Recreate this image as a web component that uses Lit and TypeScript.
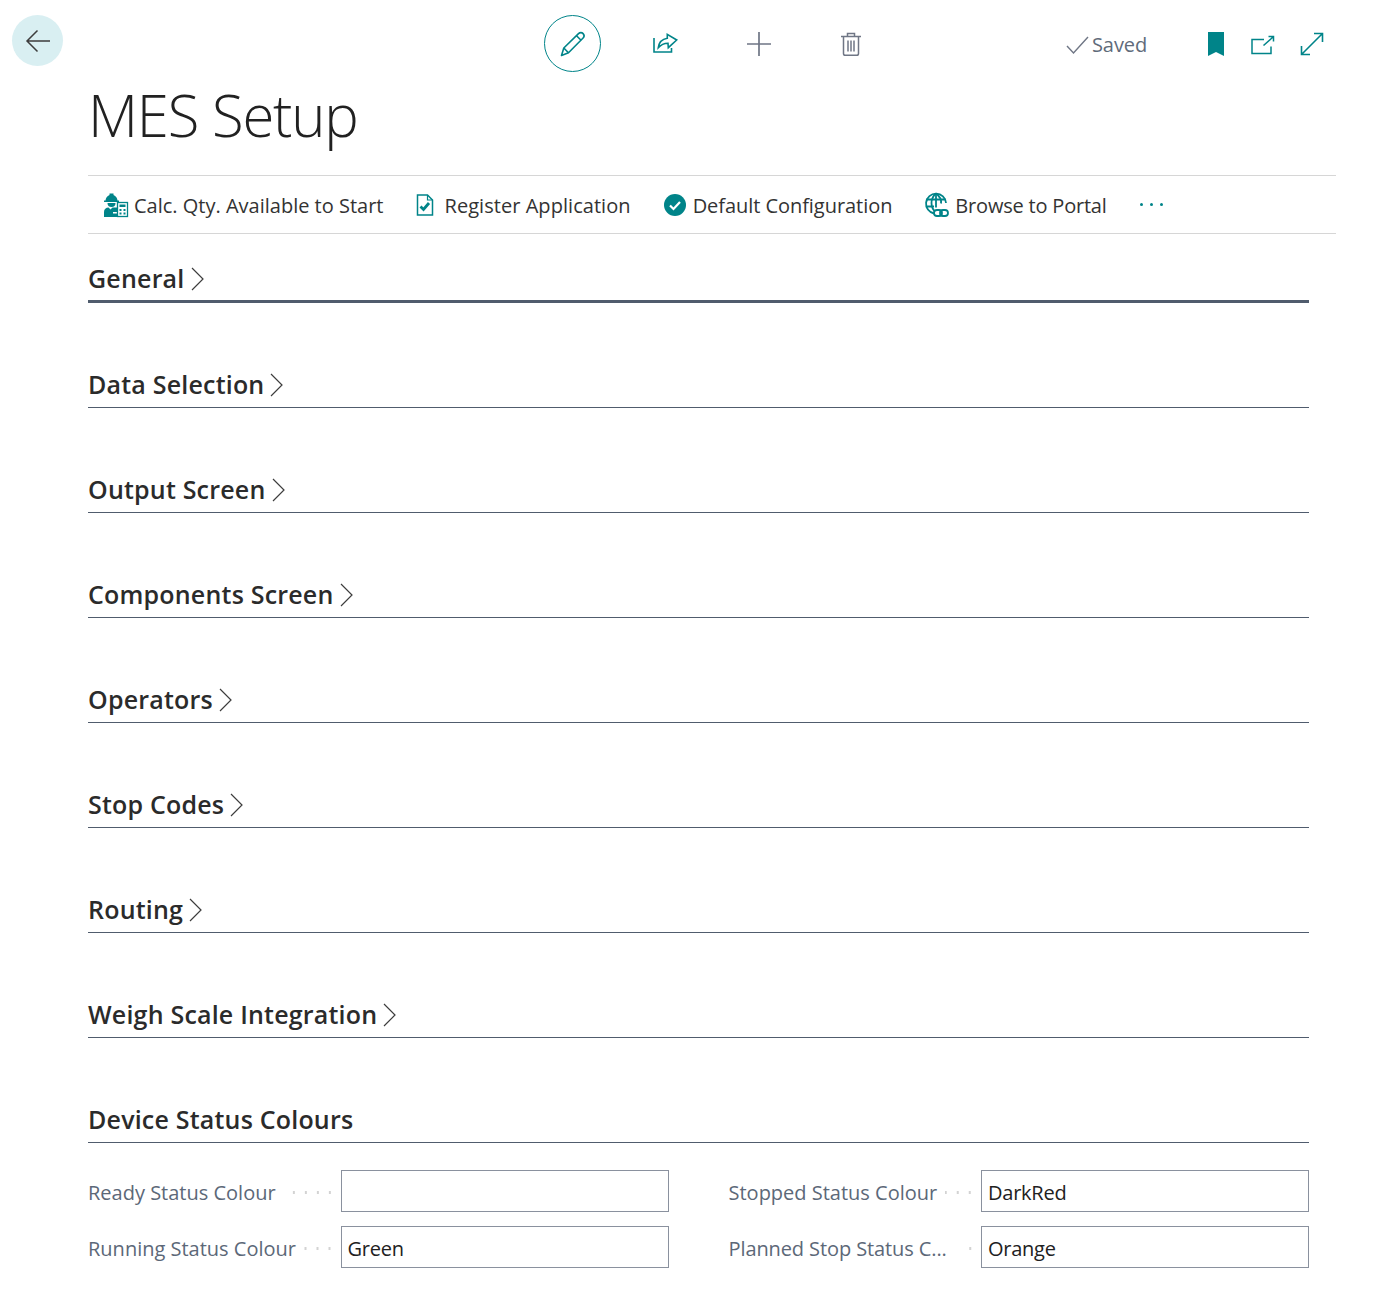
import { LitElement, html, css, svg } from "lit";
import { customElement } from "lit/decorators.js";

const sections = ["General", "Data Selection", "Output Screen", "Components Screen", "Operators", "Stop Codes", "Routing", "Weigh Scale Integration"];

@customElement("app-root")
export class AppRoot extends LitElement {
  static styles = css`
    :host { display: block; height: 1307px; background: #fff; overflow: hidden; font-family: "Open Sans", "Noto Sans", sans-serif; color: #212121; }
    svg { display: block; flex: none; overflow: visible; }
    .header { display: flex; align-items: flex-start; height: 69px; padding: 15px 0 0 12px; }
    .back { width: 51px; height: 51px; border-radius: 50%; background: #d9eff2; display: flex; align-items: center; justify-content: center; }
    .actions { display: flex; align-items: center; height: 57px; margin-left: 481px; }
    .pencil { width: 55px; height: 55px; border: 1px solid #008489; border-radius: 50%; display: flex; align-items: center; justify-content: center; margin-right: 46px; }
    .act { width: 36px; height: 28px; display: flex; align-items: center; justify-content: center; margin-right: 58px; }
    .act.plus { margin-right: 56px; }
    .act.last { margin-right: 0; }
    .status { display: flex; align-items: center; gap: 3px; height: 59px; margin-left: 197px; font-size: 20px; letter-spacing: -0.1px; color: #5f6b7a; }
    .tools { display: flex; align-items: center; gap: 26px; height: 57px; margin-left: 60px; }
    .tools .expand { margin-left: -1px; }
    main { margin: 0 50px 0 88px; }
    h1 { margin: 0; height: 91px; font-size: 58px; line-height: 62px; font-weight: 300; letter-spacing: -1.2px; color: #212121; }
    .bar { display: flex; align-items: center; height: 57px; padding-left: 16px; border-top: 1px solid #d6d6d6; border-bottom: 1px solid #d6d6d6; font-size: 20px; gap: 33px; color: #333; }
    .item { display: flex; align-items: center; gap: 6px; }
    .item span { padding-top: 2px; }
    .item.reg { gap: 10px; letter-spacing: 0.05px; }
    .item.def { gap: 7px; letter-spacing: -0.05px; }
    .item.web { gap: 6px; letter-spacing: -0.2px; }
    .more { display: flex; gap: 7px; }
    .more i { width: 3px; height: 3px; border-radius: 50%; background: #008489; }
    .content { margin-right: 27px; padding-top: 29px; }
    .section { box-sizing: border-box; height: 40px; margin-bottom: 65px; border-bottom: 1px solid #505c6d; display: flex; align-items: flex-end; padding-bottom: 5px; gap: 6px; font-size: 25px; line-height: 36px; font-weight: 600; letter-spacing: 0.2px; color: #2b2b2b; }
    .section.active { border-bottom-width: 3px; padding-bottom: 4px; }
    .section svg { margin-bottom: 5px; }
    .grid { display: grid; grid-template-columns: 1fr 1fr; column-gap: 60px; row-gap: 14px; margin-top: -38px; }
    .field { display: grid; grid-template-columns: 1fr 328px; align-items: center; }
    .lab { display: flex; align-items: center; min-width: 0; padding-top: 3px; font-size: 20px; color: #5c6878; }
    .lab span { flex: none; white-space: nowrap; }
    .lab b { flex: 1; height: 3px; margin: 0 5px 0 8px; background: radial-gradient(circle, #d3d3d3 1.2px, transparent 1.5px) right center / 12px 3px repeat-x; }
    .lab.long { letter-spacing: -0.1px; }
    .lab.long b { margin-left: 14px; }
    input { box-sizing: border-box; width: 328px; height: 42px; border: 1px solid #8a919e; border-radius: 0; padding: 3px 6px 0; margin: 0; font: inherit; font-size: 20px; letter-spacing: -0.25px; color: #212121; background: #fff; outline: none; }
  `;

  private ic(w: number, h: number, body: unknown, cls = "") {
    return html`<svg class=${cls} width=${w} height=${h} viewBox="0 0 ${w} ${h}" fill="none">${body}</svg>`;
  }

  render() {
    const teal = "#008489";
    const grey = "#6f7685";
    const fields = [
      ["Ready Status Colour", ""],
      ["Stopped Status Colour", "DarkRed"],
      ["Running Status Colour", "Green"],
      ["Planned Stop Status C...", "Orange"],
    ];
    return html`
      <div class="header">
        <div class="back">${this.ic(24, 22, svg`<path d="M24 11H1.500M11.500 .5 1 11l10.500 10.500" stroke="#3d3d3d" stroke-width="1.500"/>`)}</div>
        <div class="actions">
          <div class="pencil">${this.ic(26, 26, svg`<g stroke=${teal} stroke-width="1.600" stroke-linejoin="round"><path d="M1.500 24.500 3.800 17 18.500 2.600c1.400-1.300 3.400-1.300 4.600 0 1.200 1.300 1.200 3.200 0 4.400L8.500 21.800z"/><path d="m3.800 17 4.700 4.800M16.500 4.800l4.600 4.500"/></g>`)}</div>
          <div class="act">${this.ic(26, 24, svg`<g stroke=${teal} stroke-width="1.600"><path d="M2 6v14h17.500v-4"/><path d="M6.300 15.700c.6-5 3.800-8.600 9-9.400l0-4L24.700 8l-8.400 7.700-.3-4.400c-4 .1-7 1.400-9.700 4.400z"/></g>`)}</div>
          <div class="act plus">${this.ic(26, 26, svg`<path d="M13 1v24M1 13h24" stroke=${grey} stroke-width="1.700"/>`)}</div>
          <div class="act last">${this.ic(22, 24, svg`<g stroke=${grey} stroke-width="1.500"><path d="M1 4.500h20M7.500 4.500V1.500h7v3M3.500 4.500v17c0 1 .7 1.800 1.700 1.800h11.600c1 0 1.700-.8 1.700-1.800v-17M8 8.500v11M11 8.500v11M14 8.500v11"/></g>`)}</div>
        </div>
        <div class="status">${this.ic(23, 18, svg`<path d="M1 10l6.500 7L22 1" stroke=${grey} stroke-width="1.400"/>`)}<span>Saved</span></div>
        <div class="tools">
          ${this.ic(18, 24, svg`<path d="M1 0h16v24l-8-4-8 4z" fill=${teal}/>`)}
          ${this.ic(24, 20, svg`<g stroke=${teal} stroke-width="1.500"><path d="M13 5.500H1v14h19v-7M12.500 11.500 22 3M17.500 2.500h5v5"/></g>`)}
          ${this.ic(24, 24, svg`<g stroke=${teal} stroke-width="1.600"><path d="M2 22 22 2M14 1.500h8.500V10M1.500 14v8.500H10"/></g>`, "expand")}
        </div>
      </div>
      <main>
        <h1>MES Setup</h1>
        <div class="bar">
          <div class="item">${this.ic(24, 24, svg`<g fill=${teal}><path d="M1.500 7.500a6.500 6.500 0 0 1 4-5.500V.5h4V2a6.500 6.500 0 0 1 4 5.500H15V9H0V7.500z"/><path d="M3.500 10h8a4 4 0 0 1-8 0z"/><path d="M0 24v-5c0-3 2-4.500 4.500-4.500l2 2 2-2h4.500V19H9v5z"/><path d="M9 20.500h4V24H9z"/></g><rect x="13.500" y="9.500" width="10" height="14" fill="#fff" stroke=${teal} stroke-width="1.300"/><g fill=${teal}><rect x="15.500" y="11.500" width="6" height="2.500"/><rect x="15.500" y="16" width="2" height="2"/><rect x="19.500" y="16" width="2" height="2"/><rect x="15.500" y="19.500" width="2" height="2"/><rect x="19.500" y="19.500" width="2" height="2"/></g>`)}<span>Calc. Qty. Available to Start</span></div>
          <div class="item reg">${this.ic(18, 22, svg`<path d="M1.500 1h10l5 5v15h-15z" stroke=${teal} stroke-width="1.500" fill="#fff"/><path d="M11.500 1v5h5" stroke=${teal} stroke-width="1.200"/><path d="m4.500 12.500 3 3 5.500-6.500" stroke=${teal} stroke-width="2.800"/>`)}<span>Register Application</span></div>
          <div class="item def">${this.ic(22, 22, svg`<circle cx="11" cy="11" r="11" fill=${teal}/><path d="m6 11.500 3.500 3.500 6.500-7" stroke="#fff" stroke-width="2.200"/>`)}<span>Default Configuration</span></div>
          <div class="item web">${this.ic(24, 24, svg`<g stroke=${teal} stroke-width="1.800"><path d="M9 20.500A10 10 0 1 1 21 10"/><path d="M11 .5c-6 5-6 14 0 19M11 .5c4 3 5.500 7 5 10"/><path d="M1.500 6.500h19M1.500 13.500h7.500M11 .5v14"/><rect x="9" y="17" width="8" height="6" rx="3" fill="#fff"/><rect x="15" y="17" width="8" height="6" rx="3" fill="none"/></g>`)}<span>Browse to Portal</span></div>
          <div class="more"><i></i><i></i><i></i></div>
        </div>
        <div class="content">
          ${sections.map((s, i) => html`<div class="section ${i === 0 ? "active" : ""}"><span>${s}</span>${this.ic(13, 24, svg`<path d="M1 1l11 11L1 23" stroke="#3d3d3d" stroke-width="1.200"/>`)}</div>`)}
          <div class="section"><span>Device Status Colours</span></div>
          <div class="grid">
            ${fields.map(([l, v], i) => html`<div class="field"><div class="lab ${i === 3 ? "long" : ""}"><span>${l}</span><b></b></div><input .value=${v} /></div>`)}
          </div>
        </div>
      </main>
    `;
  }
}
